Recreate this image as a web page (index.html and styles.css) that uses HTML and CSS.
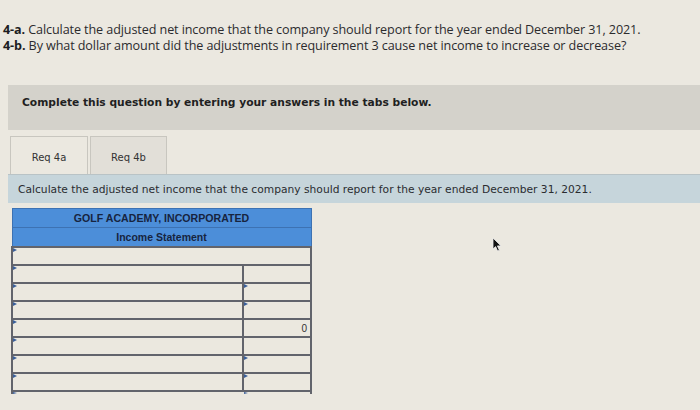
FILE: index.html
```html
<!DOCTYPE html>
<html>
<head>
<meta charset="utf-8">
<link rel="stylesheet" href="styles.css">
</head>
<body>
<div class="page">
  <div class="intro">
    <p><b>4-a.</b> Calculate the adjusted net income that the company should report for the year ended December 31, 2021.</p>
    <p><b>4-b.</b> By what dollar amount did the adjustments in requirement 3 cause net income to increase or decrease?</p>
  </div>
  <div class="band">Complete this question by entering your answers in the tabs below.</div>
  <div class="tabs">
    <div class="tab active">Req 4a</div>
    <div class="tab">Req 4b</div>
  </div>
  <div class="instr">Calculate the adjusted net income that the company should report for the year ended December 31, 2021.</div>
  <table class="stmt">
    <colgroup><col class="cl"><col class="cr"></colgroup>
    <tr class="hd"><th colspan="2">GOLF ACADEMY, INCORPORATED</th></tr>
    <tr class="hd hd2"><th colspan="2">Income Statement</th></tr>
    <tr><td colspan="2" class="mk"></td></tr>
    <tr><td class="mk"></td><td></td></tr>
    <tr><td class="mk"></td><td class="mk"></td></tr>
    <tr><td class="mk"></td><td class="mk"></td></tr>
    <tr><td class="mk"></td><td class="num">0</td></tr>
    <tr><td class="mk"></td><td></td></tr>
    <tr><td class="mk"></td><td class="mk"></td></tr>
    <tr><td class="mk"></td><td class="mk"></td></tr>
    <tr class="cut"><td class="mk"></td><td class="mk"></td></tr>
  </table>
  <svg class="cursor" width="11" height="15" viewBox="0 0 11 15"><path d="M1 1 L1 12 L3.6 9.6 L5.6 14 L7.4 13.2 L5.4 8.9 L9 8.9 Z" fill="#111" stroke="#eee" stroke-width="0.8"/></svg>
</div>
</body>
</html>
```
FILE: styles.css
```css
html, body {
  margin: 0;
  padding: 0;
  background: #ebe8e0;
}
.page {
  position: relative;
  width: 700px;
  height: 410px;
  overflow: hidden;
  padding-left: 8px;
  box-sizing: border-box;
}
.intro {
  padding: 22px 0 0 0;
  margin-left: -5px;
  font-family: "Open Sans", "Liberation Sans", sans-serif;
  font-size: 12.6px;
  color: #2b2b2e;
  letter-spacing: -0.1px;
}
.intro p {
  margin: 0;
  line-height: 16px;
}
.intro b {
  font-weight: 700;
  color: #1d1d22;
}
.band {
  margin-top: 31px;
  height: 45px;
  box-sizing: border-box;
  padding: 11px 0 0 14px;
  background: #d4d2cb;
  font-family: "DejaVu Sans", Verdana, sans-serif;
  font-weight: bold;
  font-size: 10.7px;
  line-height: 14px;
  color: #1f1f22;
}
.tabs {
  display: flex;
  gap: 2px;
  margin-top: 6px;
  padding-left: 2px;
  height: 38px;
}
.tab {
  width: 77px;
  height: 38px;
  box-sizing: border-box;
  border: 1px solid #c8c6bf;
  border-bottom: none;
  background: #e2dfd8;
  display: flex;
  align-items: center;
  justify-content: center;
  font-family: "DejaVu Sans", Verdana, sans-serif;
  font-size: 10px;
  color: #333;
  padding-top: 4px;
}
.tab.active {
  width: 78px;
  background: #ebe8e0;
}
.instr {
  height: 29px;
  box-sizing: border-box;
  padding: 8px 0 0 10px;
  background: #c6d5db;
  border-top: 1px solid #b9c3c6;
  font-family: "DejaVu Sans", Verdana, sans-serif;
  font-size: 10.7px;
  line-height: 14px;
  color: #2a2c30;
}
.stmt {
  margin: 5px 0 0 3px;
  width: 299px;
  border-collapse: collapse;
  table-layout: fixed;
}
.stmt col.cl {
  width: 231px;
}
.stmt col.cr {
  width: 68px;
}
.stmt .hd th {
  height: 18px;
  padding: 0;
  background: #4c8ed9;
  border: 1px solid #3d72b3;
  font-family: "Liberation Sans", Arial, sans-serif;
  font-weight: bold;
  font-size: 10.6px;
  color: #17243f;
  text-align: center;
}
.stmt .hd2 th {
  font-size: 10.5px;
}
.stmt td {
  height: 16px;
  padding: 0;
  border: 2px solid #62646c;
  background: #ebe8df;
  position: relative;
}
.stmt td.num {
  text-align: right;
  padding-right: 3px;
  font-family: "Liberation Sans", Arial, sans-serif;
  font-size: 10px;
  color: #333;
}
.stmt td.mk::before {
  content: "";
  position: absolute;
  left: 0;
  top: 0;
  border-top: 2.5px solid transparent;
  border-bottom: 2.5px solid transparent;
  border-left: 4px solid #3a5f9a;
}
.stmt tr.cut td {
  height: 2px;
  line-height: 0;
  font-size: 0;
  border-bottom: none;
  border-right-color: transparent;
}
.stmt tr.cut td:last-child {
  border-right-color: #62646c;
}
.stmt tr.cut td.mk::before {
  border-top-width: 1.5px;
  border-bottom-width: 1.5px;
}
.cursor {
  position: absolute;
  left: 492px;
  top: 237px;
}
```
